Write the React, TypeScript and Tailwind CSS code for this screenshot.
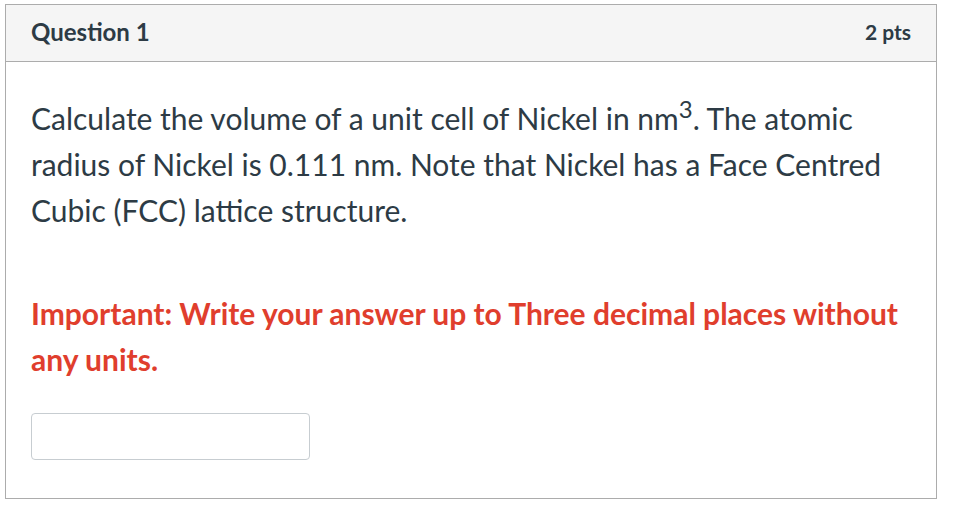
import React from 'react';

export default function App() {
  return (
    <div className="w-[953px] h-[509px] bg-white pt-[4px] pl-[5px] font-['Lato','Liberation_Sans',sans-serif]">
      <div className="w-[932px] h-[495px] border border-[#acacac] flex flex-col">
        {/* header */}
        <div className="h-[57px] bg-[#f5f5f5] border-b border-[#acacac] flex items-center justify-between pl-[25px] pr-[25px] pb-[3px]">
          <div className="text-[#2d3b45] text-[24px] font-bold">Question 1</div>
          <div className="text-[#2d3b45] text-[21px] font-bold">2 pts</div>
        </div>
        {/* body */}
        <div className="pl-[25px] pr-[25px] pt-[33px]">
          <p className="text-[#2d3b45] text-[30px] leading-[46px] w-[870px]">
            Calculate the volume of a unit cell of Nickel in nm<sup className="text-[24px] -top-[12px]">3</sup>. The atomic radius of Nickel is 0.111 nm. Note that Nickel has a Face Centred Cubic (FCC) lattice structure.
          </p>
          <p className="mt-[57px] text-[#e03e2d] text-[30px] leading-[46px] font-bold w-[870px]">
            Important: Write your answer up to Three decimal places without any units.
          </p>
          <input type="text" className="mt-[31px] w-[279px] h-[47px] border border-[#c7cdd1] rounded-[4px] outline-none" />
        </div>
      </div>
    </div>
  );
}
